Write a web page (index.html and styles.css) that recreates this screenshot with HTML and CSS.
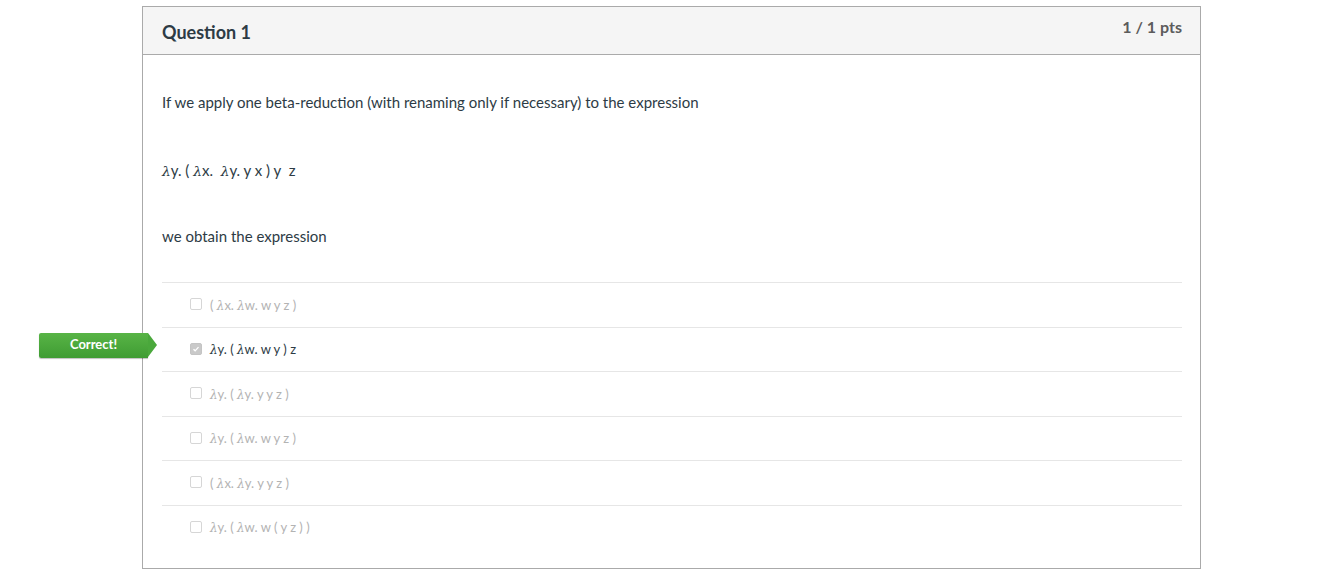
FILE: index.html
```html
<!DOCTYPE html>
<html>
<head>
<meta charset="utf-8">
<link rel="stylesheet" href="styles.css">
</head>
<body>
<div class="page">
  <div class="card">
    <div class="header">
      <div class="title">Question 1</div>
      <div class="pts">1 / 1 pts</div>
    </div>
    <div class="body">
      <p class="p1">If we apply one beta-reduction (with renaming only if necessary) to the expression</p>
      <p class="p2"><span class="lam">λ</span>y. ( <span class="lam">λ</span>x.&nbsp; <span class="lam">λ</span>y. y x ) y&nbsp; z</p>
      <p class="p3">we obtain the expression</p>
      <div class="answers">
        <div class="answer">
          <span class="cb"></span>
          <span class="atext">( <span class="lam">λ</span>x. <span class="lam">λ</span>w. w y z )</span>
        </div>
        <div class="answer selected">
          <div class="ribbon">Correct!</div>
          <span class="cb checked"><svg width="12" height="12" viewBox="0 0 12 12"><path d="M3 6.2 L5 8.2 L9 3.8" fill="none" stroke="#fff" stroke-width="1.6"/></svg></span>
          <span class="atext"><span class="lam">λ</span>y. ( <span class="lam">λ</span>w. w y ) z</span>
        </div>
        <div class="answer">
          <span class="cb"></span>
          <span class="atext"><span class="lam">λ</span>y. ( <span class="lam">λ</span>y. y y z )</span>
        </div>
        <div class="answer">
          <span class="cb"></span>
          <span class="atext"><span class="lam">λ</span>y. ( <span class="lam">λ</span>w. w y z )</span>
        </div>
        <div class="answer">
          <span class="cb"></span>
          <span class="atext">( <span class="lam">λ</span>x. <span class="lam">λ</span>y. y y z )</span>
        </div>
        <div class="answer">
          <span class="cb"></span>
          <span class="atext"><span class="lam">λ</span>y. ( <span class="lam">λ</span>w. w ( y z ) )</span>
        </div>
      </div>
    </div>
  </div>
</div>
</body>
</html>
```

FILE: styles.css
```css
* { box-sizing: border-box; }
body {
  margin: 0;
  background: #fff;
  font-family: Lato, "Liberation Sans", sans-serif;
  color: #2d3b45;
}
.page {
  padding: 6px 0 0 142px;
}
.card {
  width: 1059px;
  border: 1px solid #aaaaaa;
}
.header {
  height: 48px;
  background: #f5f5f5;
  border-bottom: 1px solid #aaaaaa;
  display: flex;
  justify-content: space-between;
  align-items: flex-start;
  padding: 0 18px 0 19px;
}
.title {
  font-size: 18px;
  font-weight: 700;
  line-height: 22px;
  margin-top: 14px;
  color: #2d3b45;
}
.pts {
  font-size: 16px;
  font-weight: 700;
  line-height: 20px;
  margin-top: 10px;
  color: #5c5c5c;
}
.body {
  padding: 37px 18px 19px 19px;
}
.body p {
  margin: 0;
  font-size: 15px;
  line-height: 20px;
}
.p2 { margin-top: 48px !important; }
.p3 { margin-top: 45px !important; }
.lam {
  font-family: "DejaVu Serif", "Liberation Serif", serif;
  font-style: italic;
  font-size: 0.92em;
}
.answers {
  margin-top: 36px;
}
.answer {
  position: relative;
  height: 44.5px;
  border-top: 1px solid #e6e6e6;
  display: flex;
  align-items: center;
  padding-left: 28px;
  font-size: 13px;
  color: #b3b3b3;
}
.answer.selected { color: #2d3b45; }
.cb {
  width: 12px;
  height: 12px;
  border: 1px solid #d6d6d6;
  border-radius: 2px;
  background: #fff;
  margin-right: 8px;
  display: inline-flex;
  align-items: center;
  justify-content: center;
  margin-top: -1px;
}
.cb.checked {
  background: #c9c9c9;
  border-color: #c4c4c4;
}
.cb svg { display: block; }
.ribbon {
  position: absolute;
  left: -123px;
  top: 5px;
  width: 109px;
  height: 25px;
  background: linear-gradient(#58b446, #3f9c33);
  border-radius: 2px 0 0 2px;
  color: #fff;
  font-size: 13px;
  font-weight: 700;
  line-height: 23px;
  text-align: center;
  box-shadow: 0 1px 1px rgba(0,0,0,0.25);
}
.ribbon::after {
  content: "";
  position: absolute;
  right: -9px;
  top: 0;
  border-top: 12.5px solid transparent;
  border-bottom: 12.5px solid transparent;
  border-left: 9px solid #4aa83c;
}
```
